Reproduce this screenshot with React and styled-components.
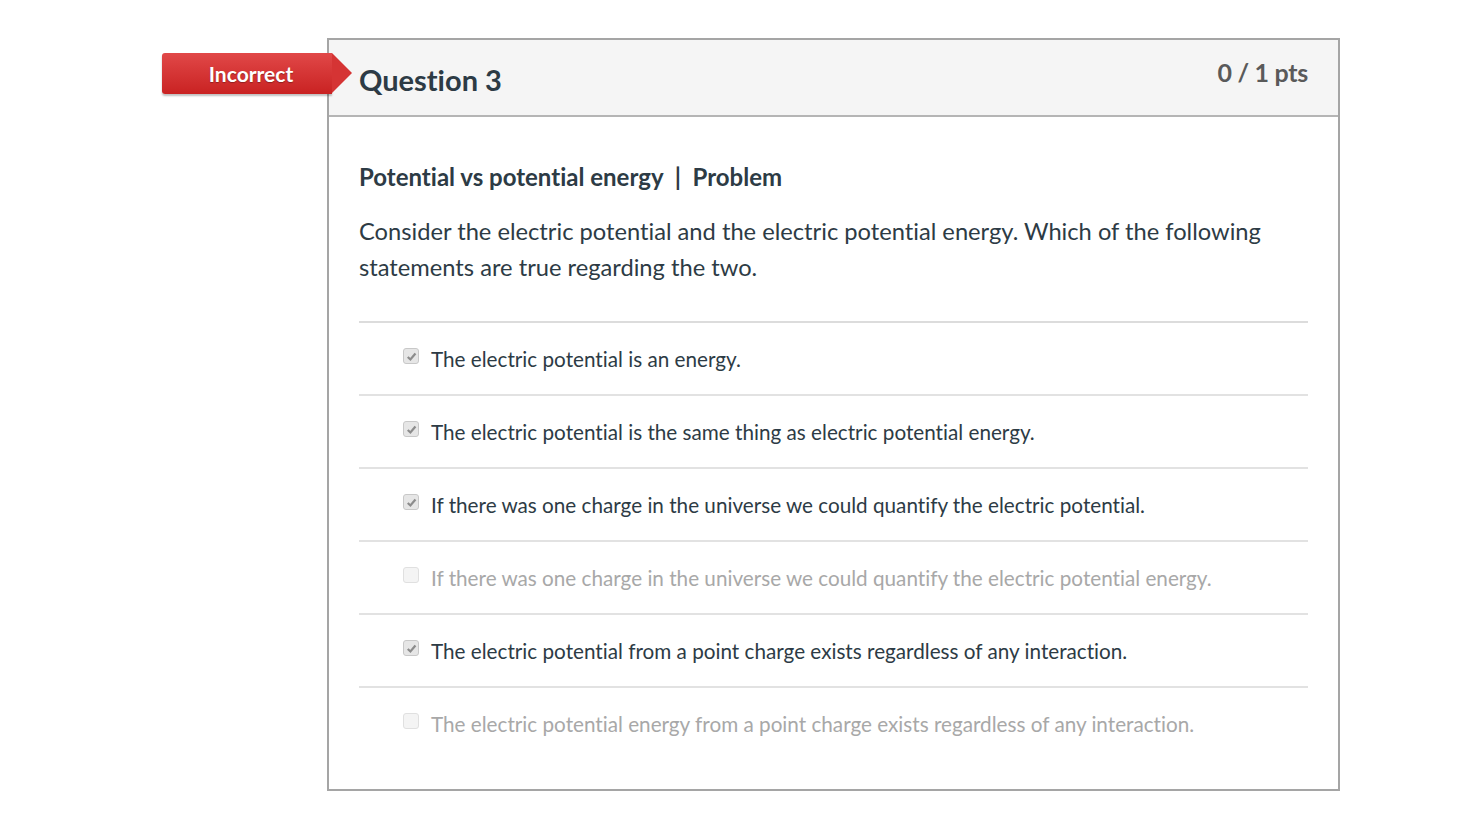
import React from 'react';
import styled, { createGlobalStyle } from 'styled-components';

const GlobalStyle = createGlobalStyle`
  body {
    margin: 0;
    background: #fff;
    font-family: Lato, "Open Sans", sans-serif;
    font-variant-ligatures: none;
    color: #2d3b45;
  }
`;

const Page = styled.div`
  padding: 38px 0 0 327px;
`;

const Card = styled.div`
  position: relative;
  width: 1013px;
  height: 753px;
  box-sizing: border-box;
  border: 2px solid #a5a5a5;
  background: #fff;
`;

const Ribbon = styled.div`
  position: absolute;
  left: -167px;
  top: 13px;
  width: 170px;
  height: 41px;
  display: flex;
  align-items: center;
  justify-content: center;
  padding-left: 8px;
  box-sizing: border-box;
  background: linear-gradient(#e14848, #c92222);
  border-radius: 3px 0 0 3px;
  box-shadow: 0 2px 2px rgba(0, 0, 0, 0.25);
  color: #fff;
  font-size: 21px;
  font-weight: 700;
  text-shadow: 0 1px 1px rgba(0, 0, 0, 0.3);

  &::after {
    content: '';
    position: absolute;
    right: -20px;
    top: 0;
    border-top: 20.5px solid transparent;
    border-bottom: 20.5px solid transparent;
    border-left: 20px solid #d53434;
  }
`;

const Header = styled.div`
  height: 75px;
  display: flex;
  justify-content: space-between;
  align-items: flex-start;
  padding: 0 30px;
  background: #f5f5f5;
  border-bottom: 2px solid #b5b5b5;
`;

const Title = styled.h2`
  margin: 22px 0 0;
  font-size: 29px;
  font-weight: 700;
  color: #2d3b45;
`;

const Points = styled.div`
  margin-top: 17px;
  font-size: 25px;
  font-weight: 700;
  letter-spacing: -0.3px;
  color: #5a5a5a;
`;

const Body = styled.div`
  padding: 42px 30px 0;
`;

const Subtitle = styled.h3`
  margin: 0;
  font-size: 24px;
  font-weight: 700;
  line-height: 36px;
  color: #2d3b45;
`;

const Prompt = styled.p`
  margin: 18px 0 0;
  font-size: 23.7px;
  line-height: 36px;
  color: #2d3b45;
`;

const AnswerList = styled.div`
  margin-top: 36px;
  border-top: 2px solid #dcdcdc;
`;

const AnswerRow = styled.div`
  height: 71px;
  display: flex;
  align-items: center;
  gap: 12px;
  padding-left: 44px;
  border-bottom: ${(p) => (p.last ? 'none' : '2px solid #e2e2e2')};
  font-size: 20.7px;
  color: ${(p) => (p.checked ? '#2d3b45' : '#a8a8a8')};
`;

const Box = styled.span`
  width: 16px;
  height: 16px;
  box-sizing: border-box;
  border: 1px solid ${(p) => (p.checked ? '#c8c8c8' : '#e0e0e0')};
  border-radius: 3px;
  background: ${(p) => (p.checked ? '#e6e6e6' : '#f4f4f4')};
  display: flex;
  align-items: center;
  justify-content: center;
  margin-top: -5px;
  flex-shrink: 0;
`;

const answers = [
  { text: 'The electric potential is an energy.', checked: true },
  { text: 'The electric potential is the same thing as electric potential energy.', checked: true },
  { text: 'If there was one charge in the universe we could quantify the electric potential.', checked: true },
  { text: 'If there was one charge in the universe we could quantify the electric potential energy.', checked: false },
  { text: 'The electric potential from a point charge exists regardless of any interaction.', checked: true },
  { text: 'The electric potential energy from a point charge exists regardless of any interaction.', checked: false },
];

const Check = () => (
  <svg width="11" height="11" viewBox="0 0 10 10">
    <path d="M1.6 5.4 L4 7.7 L8.6 2.2" fill="none" stroke="#8c8c8c" strokeWidth="2" />
  </svg>
);

const App = () => (
  <>
    <GlobalStyle />
    <Page>
      <Card>
        <Ribbon>Incorrect</Ribbon>
        <Header>
          <Title>Question 3</Title>
          <Points>0 / 1 pts</Points>
        </Header>
        <Body>
          <Subtitle>Potential vs potential energy&nbsp; |&nbsp; Problem</Subtitle>
          <Prompt>
            Consider the electric potential and the electric potential energy. Which of the following
            statements are true regarding the two.
          </Prompt>
          <AnswerList>
            {answers.map((a, i) => (
              <AnswerRow key={i} checked={a.checked} last={i === answers.length - 1}>
                <Box checked={a.checked}>{a.checked && <Check />}</Box>
                {a.text}
              </AnswerRow>
            ))}
          </AnswerList>
        </Body>
      </Card>
    </Page>
  </>
);

export default App;
